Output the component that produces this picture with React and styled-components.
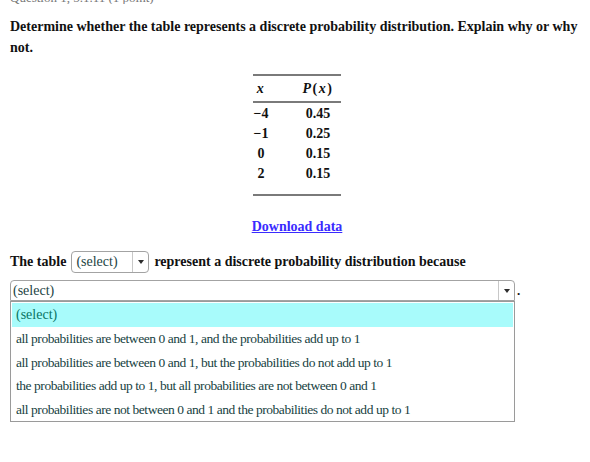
import React from "react";
import styled, { createGlobalStyle } from "styled-components";

const Global = createGlobalStyle`
  html, body { margin: 0; padding: 0; background: #fff; }
  body { font-family: "Liberation Serif", "Times New Roman", serif; color: #111; }
`;

const Page = styled.div`
  width: 590px;
  height: 462px;
  box-sizing: border-box;
  padding: 0 6px 0 10px;
  overflow: hidden;
`;

const CutLine = styled.div`
  height: 4px;
  overflow: hidden;
  color: #777;
  font-size: 13px;
  line-height: 13px;
  & > span { display: block; margin-top: -9px; }
`;

const Heading = styled.p`
  margin: 12px 0 0;
  font-weight: bold;
  font-size: 14px;
  line-height: 21px;
`;

const Center = styled.div`
  display: flex;
  flex-direction: column;
  align-items: center;
`;

const Table = styled.div`
  margin-top: 16px;
  width: 88px;
  border-top: 2px solid #7a7a7a;
  border-bottom: 2px solid #7a7a7a;
  padding-bottom: 10px;
  display: grid;
  grid-template-columns: 16px 46px;
  column-gap: 26px;
  font-weight: bold;
  font-size: 14px;
`;

const Head = styled.div`
  height: 25px;
  line-height: 25px;
  text-align: center;
  border-bottom: 2px solid #7a7a7a;
  margin-right: ${(p) => (p.$first ? "-26px" : "0")};
  padding-right: ${(p) => (p.$first ? "26px" : "0")};
  margin-bottom: 1px;
  letter-spacing: 1.5px;
  i { font-style: italic; }
`;

const Cell = styled.div`
  height: 20px;
  line-height: 20px;
  text-align: center;
`;

const Link = styled.a`
  margin-top: 23px;
  font-weight: bold;
  font-size: 14px;
  line-height: 16px;
  color: #3a2bff;
  text-decoration: underline;
`;

const Line = styled.div`
  display: flex;
  align-items: center;
  font-weight: bold;
  font-size: 14px;
  gap: ${(p) => p.$gap || 5}px;
  margin-top: ${(p) => p.$top || 0}px;
`;

const SelectBox = styled.div`
  position: relative;
  box-sizing: border-box;
  width: ${(p) => p.$w}px;
  height: ${(p) => p.$h || 22}px;
  border: 1px solid #a3a3a3;
  border-radius: ${(p) => (p.$open ? "4px 4px 0 0" : "4px")};
  display: flex;
  align-items: center;
  background: #fff;
  font-weight: normal;
  font-size: 14px;
  color: #1d4444;
`;

const SelectText = styled.span`
  flex: 1;
  padding-left: ${(p) => p.$pad || 4}px;
  white-space: nowrap;
`;

const Arrow = styled.span`
  width: 15px;
  align-self: stretch;
  border-left: 1px solid #c8c8c8;
  display: flex;
  align-items: center;
  justify-content: center;
  &::after {
    content: "";
    border-left: 3.5px solid transparent;
    border-right: 3.5px solid transparent;
    border-top: 4px solid #2d2d2d;
  }
`;

const Dot = styled.span`
  font-weight: bold;
  font-size: 13px;
`;

const Menu = styled.ul`
  position: absolute;
  left: -1px;
  top: 20px;
  width: 505px;
  box-sizing: border-box;
  margin: 0;
  padding: 1px 1px 0;
  list-style: none;
  border: 1px solid #9a9a9a;
  background: #fff;
  z-index: 2;
`;

const Option = styled.li`
  height: ${(p) => (p.$active ? 24 : 23.5)}px;
  line-height: ${(p) => (p.$active ? 24 : 23.5)}px;
  padding-left: 4px;
  font-size: ${(p) => (p.$active ? 14 : 13.5)}px;
  white-space: nowrap;
  letter-spacing: ${(p) => (p.$active ? "0" : "-0.45px")};
  background: ${(p) => (p.$active ? "#a8fbfb" : "transparent")};
  color: ${(p) => (p.$active ? "#0a7563" : "#173f3f")};
`;

const options = [
  "(select)",
  "all probabilities are between 0 and 1, and the probabilities add up to 1",
  "all probabilities are between 0 and 1, but the probabilities do not add up to 1",
  "the probabilities add up to 1, but all probabilities are not between 0 and 1",
  "all probabilities are not between 0 and 1 and the probabilities do not add up to 1",
];

const rows = [
  ["\u22124", "0.45"],
  ["\u22121", "0.25"],
  ["0", "0.15"],
  ["2", "0.15"],
];

export default function App() {
  return (
    <>
      <Global />
      <Page>
        <CutLine>
          <span>Question 1, 5.1.11 (1 point)</span>
        </CutLine>
        <Heading>
          Determine whether the table represents a discrete probability distribution. Explain why or why not.
        </Heading>
        <Center>
          <Table>
            <Head $first>
              <i>x</i>
            </Head>
            <Head>
              <i>P</i>(<i>x</i>)
            </Head>
            {rows.map(([a, b]) => (
              <React.Fragment key={a}>
                <Cell>{a}</Cell>
                <Cell>{b}</Cell>
              </React.Fragment>
            ))}
          </Table>
          <Link href="#">Download data</Link>
        </Center>
        <Line $top={16}>
          <span>The table</span>
          <SelectBox $w={78}>
            <SelectText>(select)</SelectText>
            <Arrow />
          </SelectBox>
          <span>represent a discrete probability distribution because</span>
        </Line>
        <Line $top={7} $gap={2}>
          <SelectBox $w={505} $h={21} $open>
            <SelectText $pad={2}>(select)</SelectText>
            <Arrow />
            <Menu>
              {options.map((o, i) => (
                <Option key={o} $active={i === 0}>
                  {o}
                </Option>
              ))}
            </Menu>
          </SelectBox>
          <Dot>.</Dot>
        </Line>
      </Page>
    </>
  );
}
